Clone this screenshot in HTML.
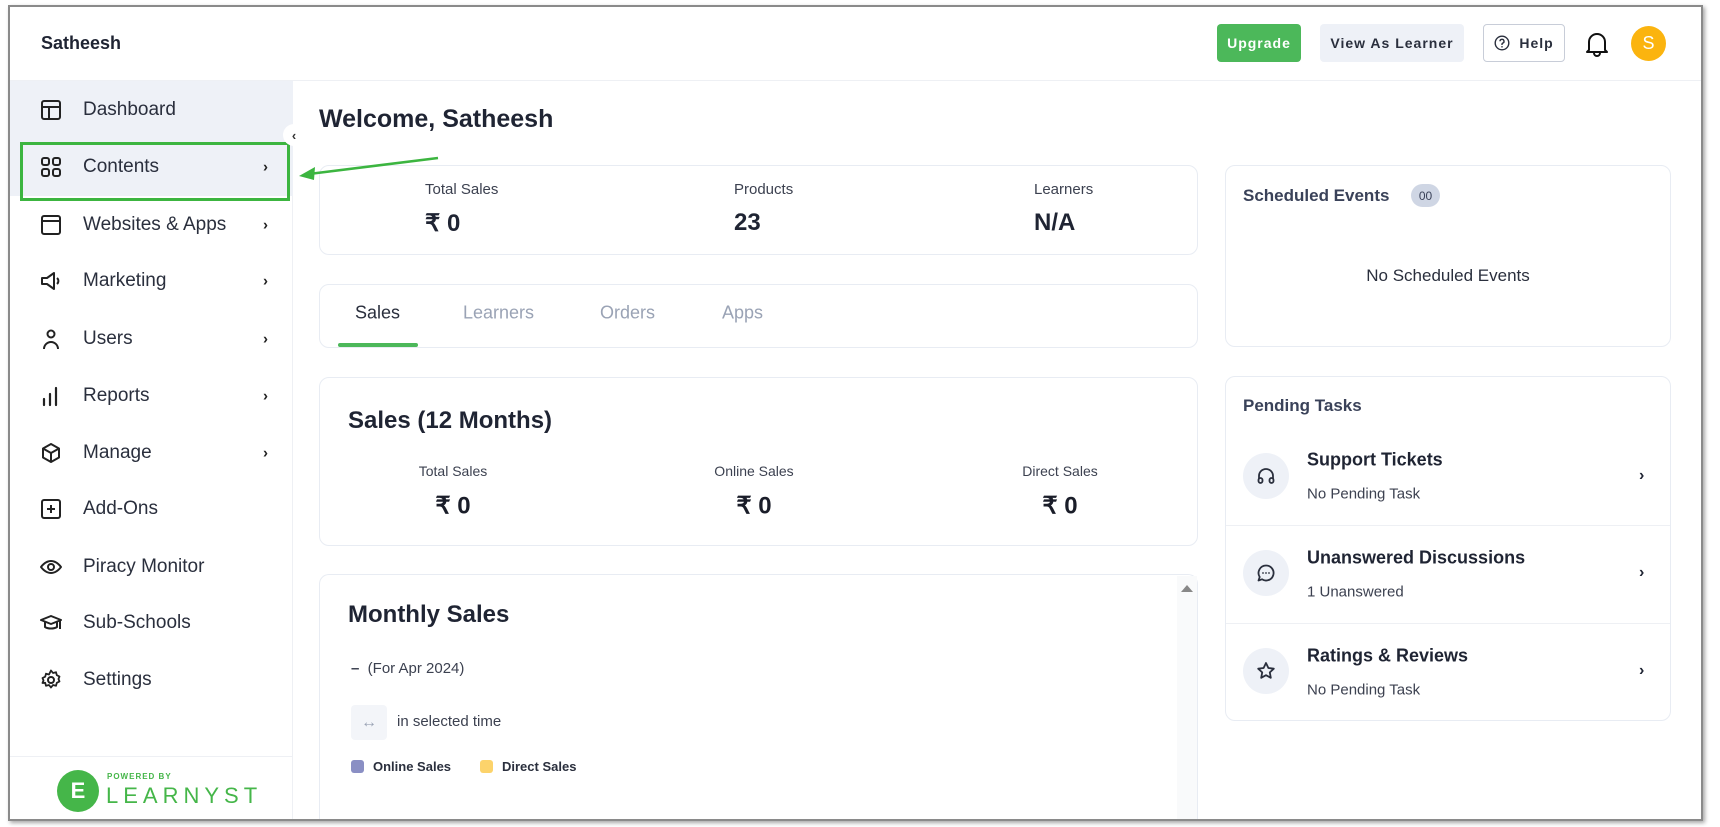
<!DOCTYPE html>
<html><head><meta charset="utf-8"><style>
*{box-sizing:border-box;margin:0;padding:0}
body{width:1720px;height:827px;background:#fff;font-family:"Liberation Sans",sans-serif;color:#1f2433;position:relative;overflow:hidden}
.a{position:absolute}
.frame{left:8px;top:5px;width:1695px;height:816px;border:2px solid #8a8a8a;box-shadow:2px 2px 4px rgba(0,0,0,.35);background:#fff}
.card{position:absolute;border:1px solid #e8ecf3;border-radius:10px;background:#fff}
.mi{position:absolute;left:83px;font-size:19px;color:#2a2f3d;transform:translateY(-50%)}
.ic{position:absolute;left:40px;width:22px;height:22px;transform:translateY(-50%)}
.chev{position:absolute;left:263px;font-size:15px;font-weight:bold;color:#222;transform:translateY(-50%)}
.lbl{position:absolute;font-size:15px;color:#3c4150;transform:translate(-50%,-50%);white-space:nowrap}
.val{position:absolute;font-size:24px;font-weight:bold;color:#1a1d29;transform:translate(-50%,-50%);white-space:nowrap}
.tab{position:absolute;font-size:18px;color:#9aa3b5;transform:translateY(-50%)}
.tt{position:absolute;left:1307px;font-size:18px;font-weight:bold;color:#1f2433;transform:translateY(-50%)}
.ts{position:absolute;left:1307px;font-size:15px;color:#3c4150;transform:translateY(-50%)}
.circ{position:absolute;left:1243px;width:46px;height:46px;border-radius:50%;background:#eef1f7;transform:translateY(-50%);display:flex;align-items:center;justify-content:center}
.tch{position:absolute;left:1639px;font-size:16px;font-weight:bold;transform:translateY(-50%)}
</style></head><body>
<div class="a frame"></div>
<!-- header -->
<div class="a" style="left:41px;top:33px;font-size:18px;font-weight:bold;color:#1f2433">Satheesh</div>
<div class="a" style="left:10px;top:80px;width:1691px;height:1px;background:#eef0f4"></div>
<div class="a" style="left:1217px;top:24px;width:84px;height:38px;background:#4cb85a;border-radius:4px;color:#fff;font-weight:bold;font-size:14px;letter-spacing:1px;display:flex;align-items:center;justify-content:center">Upgrade</div>
<div class="a" style="left:1320px;top:24px;width:144px;height:38px;background:#eef1f7;border-radius:4px;color:#2a2f3d;font-weight:bold;font-size:14px;letter-spacing:1px;display:flex;align-items:center;justify-content:center">View As Learner</div>
<div class="a" style="left:1483px;top:24px;width:82px;height:38px;border:1.5px solid #c8cdd8;border-radius:4px;color:#2a2f3d;font-weight:bold;font-size:14px;letter-spacing:1px;display:flex;align-items:center;justify-content:center;gap:9px"><svg width="16" height="16" viewBox="0 0 16 16"><circle cx="8" cy="8" r="6.8" fill="none" stroke="#2a2f3d" stroke-width="1.4"/><path d="M6 6.3a2 2 0 1 1 2.6 1.9c-.5.2-.6.5-.6 1V10" fill="none" stroke="#2a2f3d" stroke-width="1.4"/><circle cx="8" cy="11.8" r=".8" fill="#2a2f3d"/></svg>Help</div>
<svg class="a" style="left:1585px;top:30px" width="24" height="28" viewBox="0 0 24 28"><path d="M4 20V12a8 8 0 0 1 16 0v8l2 2H2z" fill="none" stroke="#111" stroke-width="2" stroke-linejoin="round"/><path d="M9 23a3 3 0 0 0 6 0" fill="none" stroke="#111" stroke-width="2"/></svg>
<div class="a" style="left:1631px;top:26px;width:35px;height:35px;border-radius:50%;background:#fbb40f;color:#fff;font-size:18px;display:flex;align-items:center;justify-content:center">S</div>
<!-- sidebar -->
<div class="a" style="left:10px;top:81px;width:283px;height:738px;background:#fff;border-right:1px solid #eef0f4"></div>
<div class="a" style="left:10px;top:81px;width:283px;height:115px;background:#eef1f7"></div>
<div class="a" style="left:20px;top:142px;width:270px;height:59px;border:3px solid #3cb540"></div>
<div class="a" style="left:283px;top:124px;width:22px;height:22px;border-radius:50%;background:#fff;font-size:13px;font-weight:bold;display:flex;align-items:center;justify-content:center;color:#333">‹</div>
<svg class="ic" style="top:110px" viewBox="0 0 22 22"><rect x="2" y="2" width="18" height="18" rx="2" fill="none" stroke="#222" stroke-width="2"/><path d="M2 8h18M9 8v12" stroke="#222" stroke-width="2"/></svg>
<div class="mi" style="top:110px">Dashboard</div>
<svg class="ic" style="top:167px" viewBox="0 0 22 22"><g fill="none" stroke="#222" stroke-width="2"><rect x="2" y="2" width="7" height="7" rx="2"/><rect x="13" y="2" width="7" height="7" rx="2"/><rect x="2" y="13" width="7" height="7" rx="2"/><rect x="13" y="13" width="7" height="7" rx="2"/></g></svg>
<div class="mi" style="top:167px">Contents</div><div class="chev" style="top:167px">›</div>
<svg class="ic" style="top:225px" viewBox="0 0 22 22"><rect x="2" y="2" width="18" height="18" rx="2" fill="none" stroke="#222" stroke-width="2"/><path d="M2 7h18" stroke="#222" stroke-width="2"/></svg>
<div class="mi" style="top:225px">Websites &amp; Apps</div><div class="chev" style="top:225px">›</div>
<svg class="ic" style="top:281px" viewBox="0 0 22 22"><path d="M2 8h5l7-5v16l-7-5H2z" fill="none" stroke="#222" stroke-width="2" stroke-linejoin="round"/><path d="M17 8a4 4 0 0 1 0 6" fill="none" stroke="#222" stroke-width="2"/></svg>
<div class="mi" style="top:281px">Marketing</div><div class="chev" style="top:281px">›</div>
<svg class="ic" style="top:339px" viewBox="0 0 22 22"><circle cx="11" cy="6" r="3.5" fill="none" stroke="#222" stroke-width="2"/><path d="M4 21a7 7 0 0 1 14 0" fill="none" stroke="#222" stroke-width="2"/></svg>
<div class="mi" style="top:339px">Users</div><div class="chev" style="top:339px">›</div>
<svg class="ic" style="top:396px" viewBox="0 0 22 22"><path d="M4 20v-6M10 20V9M16 20V3" stroke="#222" stroke-width="2.2" stroke-linecap="round"/></svg>
<div class="mi" style="top:396px">Reports</div><div class="chev" style="top:396px">›</div>
<svg class="ic" style="top:453px" viewBox="0 0 22 22"><path d="M11 2l8 4.5v9L11 20l-8-4.5v-9zM3 6.5l8 4.5 8-4.5M11 11v9" fill="none" stroke="#222" stroke-width="2" stroke-linejoin="round"/></svg>
<div class="mi" style="top:453px">Manage</div><div class="chev" style="top:453px">›</div>
<svg class="ic" style="top:509px" viewBox="0 0 22 22"><rect x="2" y="2" width="18" height="18" rx="2" fill="none" stroke="#222" stroke-width="2"/><path d="M11 7v8M7 11h8" stroke="#222" stroke-width="2"/></svg>
<div class="mi" style="top:509px">Add-Ons</div>
<svg class="ic" style="top:567px" viewBox="0 0 22 22"><path d="M1 11s4-6 10-6 10 6 10 6-4 6-10 6S1 11 1 11z" fill="none" stroke="#222" stroke-width="2"/><circle cx="11" cy="11" r="3" fill="none" stroke="#222" stroke-width="2"/></svg>
<div class="mi" style="top:567px">Piracy Monitor</div>
<svg class="ic" style="top:623px" viewBox="0 0 22 22"><path d="M1 8l10-4 10 4-10 4z M5 10v5c3 2 9 2 12 0v-5M20 9v8" fill="none" stroke="#222" stroke-width="2" stroke-linejoin="round"/></svg>
<div class="mi" style="top:623px">Sub-Schools</div>
<svg class="ic" style="top:680px" viewBox="0 0 22 22"><circle cx="11" cy="11" r="3" fill="none" stroke="#222" stroke-width="2"/><path d="M11 1.5l2 2.5 3-.8.8 3 2.7 1.3-1 2.5 1 2.5-2.7 1.3-.8 3-3-.8-2 2.5-2-2.5-3 .8-.8-3L2.5 14l1-2.5-1-2.5 2.7-1.3.8-3 3 .8z" fill="none" stroke="#222" stroke-width="1.8" stroke-linejoin="round"/></svg>
<div class="mi" style="top:680px">Settings</div>
<div class="a" style="left:10px;top:756px;width:283px;height:1px;background:#eef0f4"></div>
<div class="a" style="left:57px;top:770px;width:42px;height:42px;border-radius:50%;background:#45b649;color:#fff;font-weight:bold;font-size:22px;display:flex;align-items:center;justify-content:center">E</div>
<div class="a" style="left:107px;top:772px;font-size:8px;font-weight:bold;color:#45b649;letter-spacing:1px">POWERED BY</div>
<div class="a" style="left:106px;top:783px;font-size:22px;color:#45b649;letter-spacing:5px">LEARNYST</div>
<!-- main -->
<div class="a" style="left:319px;top:105px;font-size:25px;font-weight:bold">Welcome, Satheesh</div>
<div class="card" style="left:319px;top:165px;width:879px;height:90px"></div>
<div class="a" style="left:425px;top:181px;font-size:15px;color:#3c4150">Total Sales</div>
<div class="a" style="left:425px;top:209px;font-size:24px;font-weight:bold">₹ 0</div>
<div class="a" style="left:734px;top:181px;font-size:15px;color:#3c4150">Products</div>
<div class="a" style="left:734px;top:209px;font-size:24px;font-weight:bold">23</div>
<div class="a" style="left:1034px;top:181px;font-size:15px;color:#3c4150">Learners</div>
<div class="a" style="left:1034px;top:209px;font-size:24px;font-weight:bold">N/A</div>
<div class="card" style="left:319px;top:284px;width:879px;height:64px"></div>
<div class="tab" style="left:355px;top:313px;color:#2a2f3d">Sales</div>
<div class="tab" style="left:463px;top:313px">Learners</div>
<div class="tab" style="left:600px;top:313px">Orders</div>
<div class="tab" style="left:722px;top:313px">Apps</div>
<div class="a" style="left:338px;top:343px;width:80px;height:4px;border-radius:2px;background:#4cb85a"></div>
<div class="card" style="left:319px;top:377px;width:879px;height:169px"></div>
<div class="a" style="left:348px;top:407px;font-size:24px;font-weight:bold">Sales (12 Months)</div>
<div class="lbl" style="left:453px;top:471px;font-size:14px">Total Sales</div>
<div class="val" style="left:453px;top:506px">₹ 0</div>
<div class="lbl" style="left:754px;top:471px;font-size:14px">Online Sales</div>
<div class="val" style="left:754px;top:506px">₹ 0</div>
<div class="lbl" style="left:1060px;top:471px;font-size:14px">Direct Sales</div>
<div class="val" style="left:1060px;top:506px">₹ 0</div>
<div class="card" style="left:319px;top:574px;width:879px;height:245px;border-radius:10px 10px 0 0;border-bottom:none"></div>
<div class="a" style="left:1177px;top:576px;width:20px;height:243px;background:#f9fafb"></div>
<div class="a" style="left:1181px;top:585px;width:0;height:0;border-left:6px solid transparent;border-right:6px solid transparent;border-bottom:7px solid #888"></div>
<div class="a" style="left:348px;top:601px;font-size:24px;font-weight:bold">Monthly Sales</div>
<div class="a" style="left:351px;top:660px;font-size:15px;color:#3c4150"><b>–</b>&nbsp;&nbsp;(For Apr 2024)</div>
<div class="a" style="left:351px;top:705px;width:36px;height:35px;background:#f3f5f9;border-radius:4px;color:#9aa3b5;font-size:16px;display:flex;align-items:center;justify-content:center">↔</div>
<div class="a" style="left:397px;top:713px;font-size:15px;color:#3c4150">in selected time</div>
<div class="a" style="left:351px;top:760px;width:13px;height:13px;border-radius:3px;background:#8a8fc4"></div>
<div class="a" style="left:373px;top:759px;font-size:13px;font-weight:bold;color:#2a2f3d">Online Sales</div>
<div class="a" style="left:480px;top:760px;width:13px;height:13px;border-radius:3px;background:#fcd36b"></div>
<div class="a" style="left:502px;top:759px;font-size:13px;font-weight:bold;color:#2a2f3d">Direct Sales</div>
<!-- arrow on top -->
<svg class="a" style="left:295px;top:155px;z-index:5" width="150" height="30"><path d="M143 3L14 19" stroke="#3cb540" stroke-width="2.5"/><path d="M4 21l16-9-1 13z" fill="#3cb540"/></svg>
<!-- right -->
<div class="card" style="left:1225px;top:165px;width:446px;height:182px"></div>
<div class="a" style="left:1243px;top:186px;font-size:17px;font-weight:bold;color:#3a4259">Scheduled Events</div>
<div class="a" style="left:1411px;top:184px;width:29px;height:23px;border-radius:12px;background:#cfd6e4;font-size:12px;color:#3a4259;display:flex;align-items:center;justify-content:center">00</div>
<div class="a" style="left:1225px;top:266px;width:446px;text-align:center;font-size:17px;color:#2a2f3d">No Scheduled Events</div>
<div class="card" style="left:1225px;top:376px;width:446px;height:345px"></div>
<div class="a" style="left:1243px;top:396px;font-size:17px;font-weight:bold;color:#3a4259">Pending Tasks</div>
<div class="circ" style="top:476px"><svg width="20" height="20" viewBox="0 0 20 20"><path d="M3 13V10a7 7 0 0 1 14 0v3" fill="none" stroke="#2a2f3d" stroke-width="1.8"/><rect x="2.5" y="12" width="4" height="5" rx="2" fill="none" stroke="#2a2f3d" stroke-width="1.8"/><rect x="13.5" y="12" width="4" height="5" rx="2" fill="none" stroke="#2a2f3d" stroke-width="1.8"/></svg></div>
<div class="tt" style="top:460px">Support Tickets</div><div class="ts" style="top:494px">No Pending Task</div><div class="tch" style="top:476px">›</div>
<div class="a" style="left:1226px;top:525px;width:444px;height:1px;background:#eef0f4"></div>
<div class="circ" style="top:573px"><svg width="20" height="20" viewBox="0 0 20 20"><path d="M10 2.5a7.5 7.5 0 1 1-4 13.8L2.5 17.5l1.2-3.5A7.5 7.5 0 0 1 10 2.5z" fill="none" stroke="#2a2f3d" stroke-width="1.8" stroke-linejoin="round"/><circle cx="7" cy="10" r=".9" fill="#2a2f3d"/><circle cx="10" cy="10" r=".9" fill="#2a2f3d"/><circle cx="13" cy="10" r=".9" fill="#2a2f3d"/></svg></div>
<div class="tt" style="top:558px">Unanswered Discussions</div><div class="ts" style="top:592px">1 Unanswered</div><div class="tch" style="top:573px">›</div>
<div class="a" style="left:1226px;top:623px;width:444px;height:1px;background:#eef0f4"></div>
<div class="circ" style="top:671px"><svg width="20" height="20" viewBox="0 0 20 20"><path d="M10 2l2.4 5 5.4.7-4 3.7 1 5.4L10 14.2 5.2 16.8l1-5.4-4-3.7 5.4-.7z" fill="none" stroke="#2a2f3d" stroke-width="1.8" stroke-linejoin="round"/></svg></div>
<div class="tt" style="top:656px">Ratings &amp; Reviews</div><div class="ts" style="top:690px">No Pending Task</div><div class="tch" style="top:671px">›</div>
</body></html>
